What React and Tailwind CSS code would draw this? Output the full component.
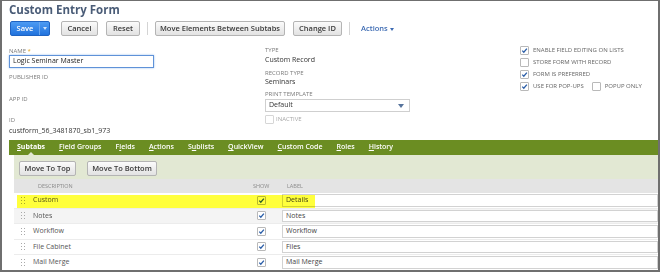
import React from 'react';

function Check({ color = '#2b5ea8' }) {
  return (
    <svg viewBox="0 0 10 10" className="h-full w-full">
      <path d="M1.8 5.2 L4 7.4 L8.4 2.4" fill="none" stroke={color} strokeWidth="1.9" />
    </svg>
  );
}

function Box({ checked, size = 'h-[9px] w-[9px]', faded }) {
  return (
    <span
      className={`flex shrink-0 items-center justify-center rounded-[1px] border bg-white ${size} ${
        faded ? 'border-[#d6d6d6]' : 'border-[#b9b9b9]'
      }`}
    >
      {checked ? <Check /> : null}
    </span>
  );
}

function Handle() {
  return (
    <svg width="4" height="7" viewBox="0 0 4 7">
      <g fill="#a9a9a9">
        <rect x="0" y="0" width="1" height="1" />
        <rect x="0" y="3" width="1" height="1" />
        <rect x="0" y="6" width="1" height="1" />
        <rect x="3" y="0" width="1" height="1" />
        <rect x="3" y="3" width="1" height="1" />
        <rect x="3" y="6" width="1" height="1" />
      </g>
    </svg>
  );
}

function Btn({ children, className = '' }) {
  return (
    <button
      className={`flex h-[15px] items-center justify-center rounded-[2px] border border-[#b4b4b4] bg-linear-to-b from-[#fbfbfb] to-[#e2e2e2] text-[7.5px] font-semibold leading-none text-[#3a3a3a] ${className}`}
    >
      {children}
    </button>
  );
}

function Label({ children, className = '' }) {
  return <div className={`h-[8px] text-[6px] leading-[8px] uppercase text-[#7c7c7c] ${className}`}>{children}</div>;
}

function Value({ children, className = '' }) {
  return <div className={`h-[9px] text-[7px] leading-[9px] text-[#333] ${className}`}>{children}</div>;
}

function Sep() {
  return <div className="h-[13px] w-px bg-[#d4d4d4]" />;
}

const tabs = [
  ['S', 'ubtabs'],
  ['F', 'ield Groups'],
  ['F', 'i', 'elds'],
  ['A', 'ctions'],
  ['S', 'u', 'blists'],
  ['Q', 'uickView'],
  ['C', 'ustom Code'],
  ['R', 'oles'],
  ['H', 'istory'],
];

const rows = [
  { name: 'Custom', label: 'Details', hl: true },
  { name: 'Notes', label: 'Notes', gray: true },
  { name: 'Workflow', label: 'Workflow' },
  { name: 'File Cabinet', label: 'Files' },
  { name: 'Mail Merge', label: 'Mail Merge' },
];

function TabText({ parts, bold }) {
  if (parts.length === 3) {
    return (
      <span className={bold ? 'font-bold' : 'font-semibold'}>
        {parts[0]}
        <span className="underline decoration-1 underline-offset-1">{parts[1]}</span>
        {parts[2]}
      </span>
    );
  }
  return (
    <span className={bold ? 'font-bold' : 'font-semibold'}>
      <span className="underline decoration-1 underline-offset-1">{parts[0]}</span>
      {parts[1]}
    </span>
  );
}

export default function App() {
  return (
    <div className="h-[272px] w-[660px] overflow-hidden border-t border-r-2 border-b-2 border-l-2 border-[#6f6f6f] bg-white font-['Open_Sans',sans-serif] text-[#333]">
      <div className="h-[17px] pt-[1px] pl-[7px] text-[11.5px] leading-[16px] font-bold text-[#4a5c77]">Custom Entry Form</div>

      <div className="mt-[3px] flex h-[15px] items-center">
        <div className="ml-[8px] flex h-[15px] overflow-hidden rounded-[2px] border border-[#1f63c2] bg-linear-to-b from-[#4d9bf3] to-[#2173dd]">
          <span className="flex w-[28px] items-center justify-center text-[7.5px] font-semibold text-white">Save</span>
          <span className="flex w-[10px] items-center justify-center border-l border-[#6aa6ee]">
            <span className="h-0 w-0 border-t-[3px] border-r-[2.5px] border-l-[2.5px] border-t-[#cfe2fb] border-r-transparent border-l-transparent" />
          </span>
        </div>
        <Btn className="ml-[11px] w-[37px]">Cancel</Btn>
        <Btn className="ml-[8px] w-[34px]">Reset</Btn>
        <div className="ml-[7px]">
          <Sep />
        </div>
        <Btn className="ml-[7px] w-[130px]">Move Elements Between Subtabs</Btn>
        <Btn className="ml-[8px] w-[49px]">Change ID</Btn>
        <div className="ml-[7px]">
          <Sep />
        </div>
        <div className="ml-[11px] flex items-center gap-[2px] text-[7.5px] font-semibold text-[#3d6bb3]">
          Actions
          <span className="mt-[1px] h-0 w-0 border-t-[3px] border-r-[2px] border-l-[2px] border-t-[#3d6bb3] border-r-transparent border-l-transparent" />
        </div>
      </div>

      <div className="flex h-[104px]">
        <div className="w-[263px] pt-[11px] pl-[7px]">
          <Label>
            Name <span className="text-[#e3a21a]">*</span>
          </Label>
          <div className="flex h-[13px] w-[145px] items-center border border-[#5f92d8] bg-white pl-[3px] text-[7px] text-[#222] shadow-[0_0_2px_#9cc0ee]">
            Logic Seminar Master
          </div>
          <Label className="mt-[5px]">Publisher ID</Label>
          <Label className="mt-[14px]">App ID</Label>
          <Label className="mt-[13px]">ID</Label>
          <Value className="mt-[2px]">custform_56_3481870_sb1_973</Value>
        </div>

        <div className="w-[255px] pt-[10px]">
          <Label>Type</Label>
          <Value className="mt-[1px]">Custom Record</Value>
          <Label className="mt-[5px]">Record Type</Label>
          <Value>Seminars</Value>
          <Label className="mt-[4px]">Print Template</Label>
          <div className="mt-[1px] flex h-[13px] w-[145px] items-center justify-between border border-[#cfcfcf] bg-white pr-[5px] pl-[3px] text-[7px] text-[#333]">
            Default
            <span className="h-0 w-0 border-t-[4px] border-r-[3.5px] border-l-[3.5px] border-t-[#56739c] border-r-transparent border-l-transparent" />
          </div>
          <div className="mt-[3px] flex h-[9px] items-center gap-[2px]">
            <Box faded />
            <span className="text-[6px] uppercase text-[#a8a8a8]">Inactive</span>
          </div>
        </div>

        <div className="flex-1 pt-[8px] text-[6px] uppercase text-[#666]">
          <div className="flex h-[12px] items-center gap-[4px]">
            <Box checked />
            Enable Field Editing on Lists
          </div>
          <div className="flex h-[12px] items-center gap-[4px]">
            <Box />
            Store Form With Record
          </div>
          <div className="flex h-[12px] items-center gap-[4px]">
            <Box checked />
            Form is Preferred
          </div>
          <div className="flex h-[12px] items-center gap-[4px]">
            <Box checked />
            Use for Pop-ups
            <span className="ml-[4px]">
              <Box />
            </span>
            Popup Only
          </div>
        </div>
      </div>

      <div className="ml-[7px] flex h-[15px] items-center gap-[14px] bg-[#6b8d22] pl-[8px] text-[7px] text-white">
        {tabs.map((t, i) => (
          <span key={i} className="relative flex h-full items-center">
            <TabText parts={t} bold={i === 0} />
            {i === 0 ? (
              <span className="absolute bottom-0 left-1/2 h-0 w-0 -translate-x-1/2 border-r-[3px] border-b-[3px] border-l-[3px] border-r-transparent border-b-[#e2e8d3] border-l-transparent" />
            ) : null}
          </span>
        ))}
      </div>

      <div className="ml-[12px]">
        <div className="flex h-[24px] items-start gap-[11px] bg-[#e2e8d3] pt-[6px] pl-[5px]">
          <Btn className="h-[14px] w-[57px]">Move To Top</Btn>
          <Btn className="h-[14px] w-[70px]">Move To Bottom</Btn>
        </div>
        <div className="flex h-[14px] items-center bg-[#e4e4e4] pl-[24px] text-[5.5px] uppercase text-[#8c8c8c]">
          <span className="w-[215px]">Description</span>
          <span className="w-[34px]">Show</span>
          <span>Label</span>
        </div>
        {rows.map((r) => (
          <div
            key={r.name}
            className={`relative flex h-[15.5px] items-center border-b border-[#ececec] ${r.gray ? 'bg-[#f4f4f4]' : 'bg-white'}`}
          >
            <span className="flex w-[19px] justify-start pl-[7px]">
              <Handle />
            </span>
            <span className="w-[224px] text-[7px] text-[#555]">{r.name}</span>
            <span className="w-[25px]">
              <Box checked />
            </span>
            <span className="flex h-[12.5px] flex-1 items-center border border-[#d2d2d2] bg-white pl-[3px] text-[7px] text-[#444]">
              {r.label}
            </span>
            {r.hl ? (
              <span className="absolute top-[2px] left-[3px] h-[13px] w-[298px] bg-[#ffff3c] mix-blend-multiply" />
            ) : null}
          </div>
        ))}
      </div>
    </div>
  );
}
